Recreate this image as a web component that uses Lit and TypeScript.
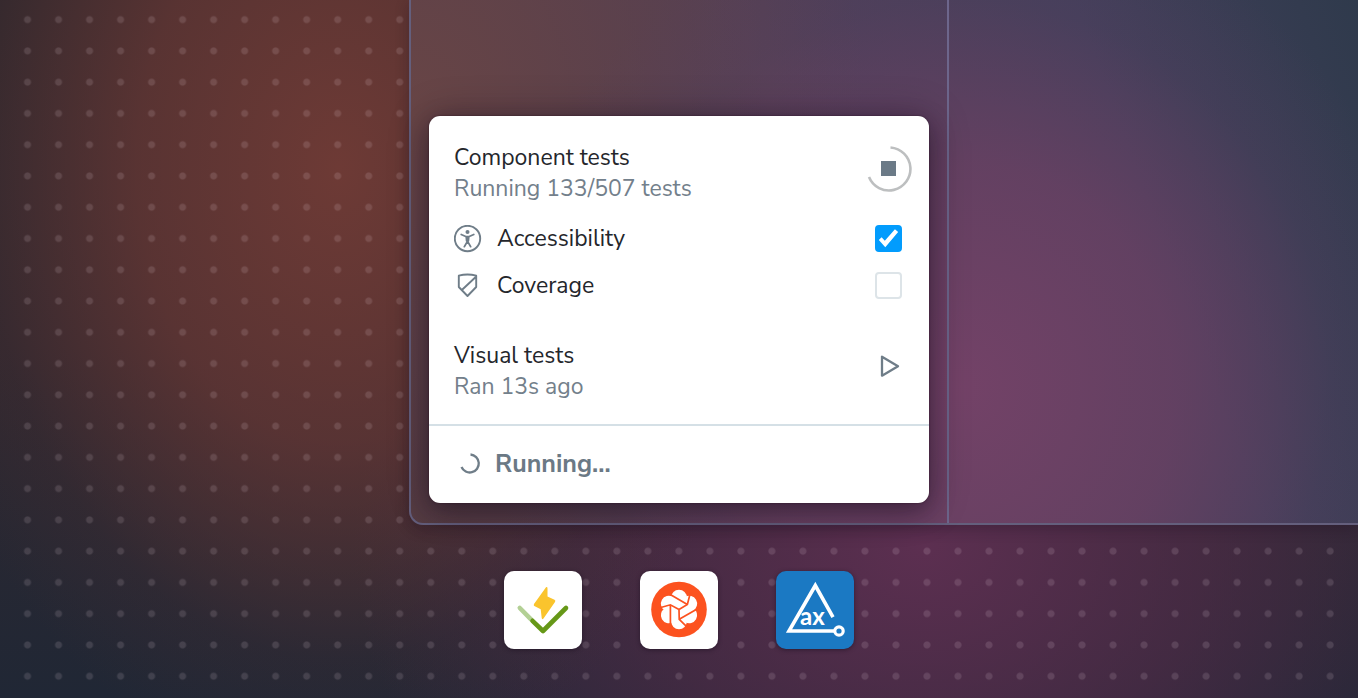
import { LitElement, html, css, svg } from "lit";
import { customElement, property, state } from "lit/decorators.js";

@customElement("test-panel")
class TestPanel extends LitElement {
  @property({ type: Number }) done = 133;
  @property({ type: Number }) total = 507;
  @state() private accessibility = true;
  @state() private coverage = false;

  static styles = css`
    :host {
      display: block;
      box-sizing: border-box;
      width: 500px;
      max-width: 100%;
      border-radius: 11px;
      background: #fff;
      box-shadow: 0 0 2px rgba(40, 15, 30, 0.7), 0 8px 24px rgba(20, 10, 25, 0.4),
        0 2px 40px rgba(20, 10, 25, 0.3);
      color: #24262b;
      font-size: 23px;
      font-weight: 400;
      line-height: 31px;
    }
    .body {
      padding: 26px 27px 22px 25px;
      border-bottom: 2px solid #d5e0e6;
    }
    .row {
      display: flex;
      align-items: flex-start;
      justify-content: space-between;
    }
    .name,
    .status {
      margin: 0;
      font-size: 23px;
      font-weight: 400;
    }
    .status {
      color: #73808b;
    }
    .options {
      padding: 11px 0 31px;
    }
    .option {
      display: flex;
      align-items: center;
      gap: 15px;
      height: 47px;
    }
    .option span {
      flex: 1;
    }
    svg {
      display: block;
      flex: none;
    }
    button {
      appearance: none;
      border: 0;
      padding: 0;
      background: none;
      display: block;
      cursor: pointer;
    }
    .stop {
      margin: 3px -11px 0 0;
    }
    .play {
      margin: 14px -2px 0 0;
    }
    input {
      appearance: none;
      box-sizing: border-box;
      width: 27px;
      height: 27px;
      margin: 0;
      border: 2px solid #dde4e8;
      border-radius: 4px;
      background: #fff;
    }
    input:checked {
      border-color: #029cfd;
      background: #029cfd;
    }
    input:checked::before {
      content: "";
      display: block;
      width: 23px;
      height: 23px;
      background: #fff;
      clip-path: polygon(8% 56%, 20% 45%, 34% 60%, 78% 10%, 92% 22%, 36% 88%);
    }
    .footer {
      display: flex;
      align-items: center;
      gap: 12px;
      height: 76px;
      padding: 0 28px 1px;
      color: #6b7985;
      font-size: 25px;
      font-weight: 700;
    }
  `;

  render() {
    return html`
      <div class="body">
        <div class="row">
          <div>
            <h2 class="name">Component tests</h2>
            <p class="status">Running ${this.done}/${this.total} tests</p>
          </div>
          <button class="stop" type="button" aria-label="Stop component tests">
            <svg width="48" height="48" viewBox="0 0 48 48">
              <path d="M25.5 2.5A21.5 21.5 0 1 1 4 32" fill="none" stroke="#bdbfc0" stroke-width="2.6" />
              <rect x="16" y="16" width="15" height="15" fill="#6b7a87" />
            </svg>
          </button>
        </div>
        <div class="options">
          <label class="option">
            <svg width="28" height="28" viewBox="0 0 28 28" fill="none" stroke="#6f7d88" stroke-width="1.9">
              <circle cx="13.500" cy="13.500" r="12.700" />
              <circle cx="13.500" cy="7" r="2" fill="#6f7d88" stroke="none" />
              <path
                d="M7.200 9.500L11.800 11.500H15.200L19.800 9.500M13.500 11.500V16.500M13.500 16.200L10.300 21.700M13.500 16.200L16.700 21.700M12.200 11.500L12.600 16M14.800 11.500L14.400 16"
                stroke-width="1.700"
                stroke-linecap="round"
                stroke-linejoin="round"
              />
            </svg>
            <span>Accessibility</span>
            <input
              type="checkbox"
              .checked=${this.accessibility}
              @change=${(e: Event) => (this.accessibility = (e.target as HTMLInputElement).checked)}
            />
          </label>
          <label class="option">
            <svg width="28" height="28" viewBox="0 0 28 28" fill="none" stroke="#6f7d88" stroke-width="1.9" stroke-linejoin="round">
              <path d="M4.800 3.700Q13.500 1.200 22.200 3.700V15L13.500 24L4.800 15ZM22 4.700L7.300 18.500" />
            </svg>
            <span>Coverage</span>
            <input
              type="checkbox"
              .checked=${this.coverage}
              @change=${(e: Event) => (this.coverage = (e.target as HTMLInputElement).checked)}
            />
          </label>
        </div>
        <div class="row">
          <div>
            <h2 class="name">Visual tests</h2>
            <p class="status">Ran 13s ago</p>
          </div>
          <button class="play" type="button" aria-label="Run visual tests">
            <svg width="28" height="28" viewBox="0 0 28 28">
              <path d="M6 2.700V21.700L22 12.200Z" fill="none" stroke="#6f7d88" stroke-width="2.300" stroke-linejoin="round" />
            </svg>
          </button>
        </div>
      </div>
      <div class="footer" role="status">
        <svg width="26" height="26" viewBox="0 0 26 26">
          <path d="M13.500 3.500A9 9 0 1 1 4.500 16" fill="none" stroke="#6f7d88" stroke-width="2.300" />
        </svg>
        <span>Running...</span>
      </div>
    `;
  }
}

const petalAngles = [0, 60, 120, 180, 240, 300];

@customElement("app-root")
class AppRoot extends LitElement {
  static styles = css`
    :host {
      display: block;
      font-family: "Nunito Sans", "Open Sans", "Noto Sans", sans-serif;
    }
    .stage {
      position: relative;
      min-height: 100vh;
      overflow: hidden;
      background:
        radial-gradient(ellipse 33% 88% at 25% 24%, rgba(116, 60, 54, 0.9), rgba(110, 57, 53, 0.66) 45%, rgba(84, 48, 50, 0.2) 80%, transparent),
        radial-gradient(ellipse 42% 65% at 68% 78%, rgba(98, 48, 84, 0.9), rgba(88, 44, 75, 0.6) 50%, transparent),
        linear-gradient(#2f282d, #30282f 50%, #202735);
    }
    .dots {
      position: absolute;
      inset: 4px 12px 6px 12px;
      background: radial-gradient(circle, rgba(255, 235, 245, 0.13) 3px, transparent 4px) 0 0 / 31px 31px round;
    }
    .window {
      position: relative;
      margin-left: calc(50% - 270px);
      border: solid #645f7d;
      border-width: 0 0 2px 2px;
      border-bottom-left-radius: 14px;
      box-shadow: 0 4px 14px rgba(25, 12, 30, 0.3);
      background:
        radial-gradient(ellipse 50% 95% at 58% 74%, rgba(117, 66, 104, 0.95), rgba(111, 65, 101, 0.7) 45%, rgba(90, 64, 98, 0.25) 78%, transparent),
        radial-gradient(ellipse 48% 105% at 0% 22%, rgba(104, 69, 70, 1), rgba(98, 67, 73, 0.7) 45%, transparent),
        linear-gradient(70deg, #4f3840, #503f58 45%, #423f5a 75%, #2f3a4c);
    }
    .pane {
      box-sizing: border-box;
      display: flex;
      justify-content: center;
      width: 538px;
      padding: 116px 0 20px;
      border-right: 2px solid #6d668c;
    }
    .tools {
      position: relative;
      display: flex;
      justify-content: center;
      gap: 58px;
      margin: 0;
      padding: 46px 0 48px;
      list-style: none;
    }
    .tool {
      display: block;
      width: 78px;
      height: 78px;
      border-radius: 10px;
      background: #fff;
      box-shadow: 0 1px 4px rgba(20, 10, 25, 0.5);
    }
    .tool.blue {
      background: #1b79c3;
    }
    .tool svg {
      display: block;
    }
    .mark {
      font: 700 24px "Lato", sans-serif;
    }
  `;

  render() {
    return html`
      <main class="stage">
        <div class="dots"></div>
        <section class="window">
          <div class="pane"><test-panel></test-panel></div>
        </section>
        <ul class="tools">
          <li class="tool">
            <svg width="78" height="78" viewBox="0 0 78 78" role="img" aria-label="Vitest">
              <g fill="none" stroke-width="4.600" stroke-linecap="round" stroke-linejoin="round">
                <path d="M15.800 37L27 48.300" stroke="#b3d095" />
                <path d="M28.500 49.800L39 60L62 37" stroke="#669817" />
              </g>
              <path
                d="M42 16.200Q43.500 15.500 43.500 17.500V25.500L50.500 28.700Q52 29.600 51 31L39.500 47.500Q38 49 37.700 47L36.700 38.300L30.300 35Q29.300 34.300 30 33Z"
                fill="#fac42d"
              />
            </svg>
          </li>
          <li class="tool">
            <svg width="78" height="78" viewBox="0 0 78 78" role="img" aria-label="Chromatic">
              <circle cx="39" cy="38.500" r="27.800" fill="#fc521f" />
              <g transform="translate(39 38.500)">
                <circle r="13" fill="#fff" />
                ${petalAngles.map((a) => svg`<circle cy="-11.800" r="7.900" fill="#fff" transform="rotate(${a})" />`)}
                ${[0, 120, 240].map(
                  (a) => svg`<path d="M-8.600 19V-4.700M-20 -1.500L-8.600 -4.700L0 0" fill="none" stroke="#fc521f" stroke-width="1.700" transform="rotate(${a})" />`,
                )}
              </g>
            </svg>
          </li>
          <li class="tool blue">
            <svg width="78" height="78" viewBox="0 0 78 78" role="img" aria-label="axe">
              <g fill="none" stroke="#fff" stroke-width="3.600">
                <path d="M57 46.200L39.300 14.500L13 60H58.500" />
                <circle cx="63" cy="60" r="4.200" stroke-width="3.200" />
              </g>
              <text class="mark" x="24" y="54" fill="#fff">ax</text>
            </svg>
          </li>
        </ul>
      </main>
    `;
  }
}
